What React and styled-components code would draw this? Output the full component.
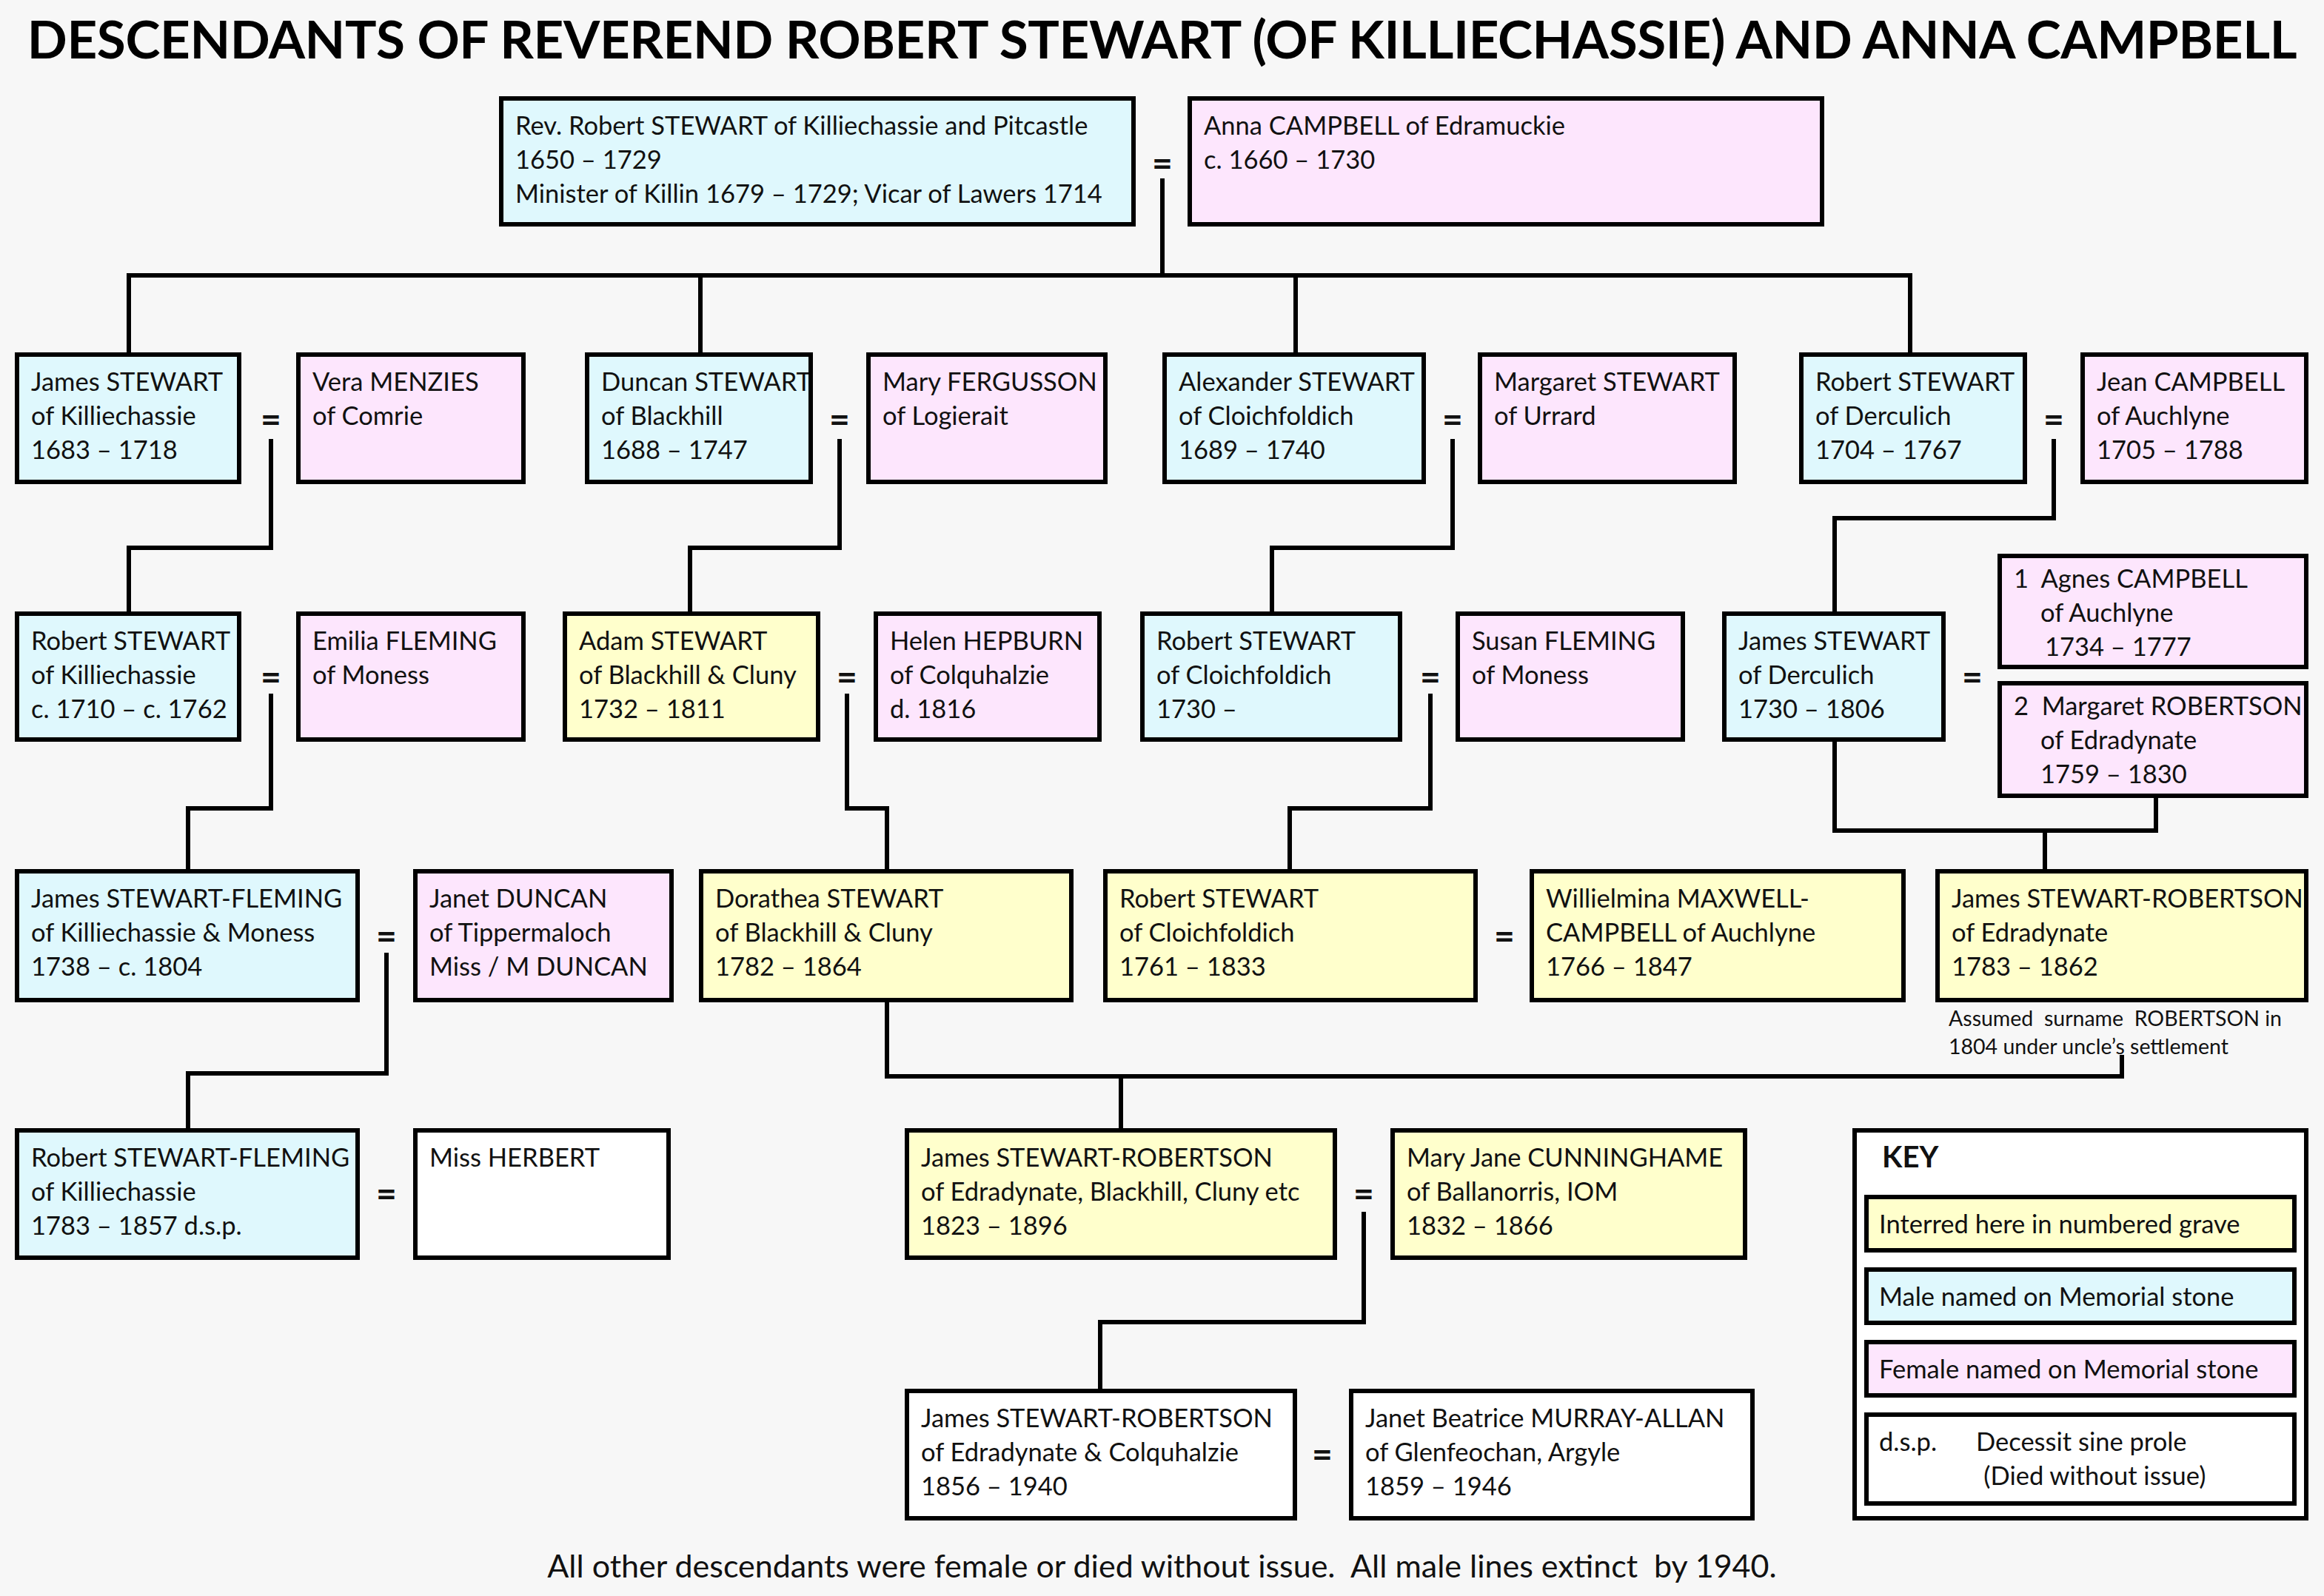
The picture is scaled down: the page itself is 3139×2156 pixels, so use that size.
import React from "react";
import styled, { createGlobalStyle } from "styled-components";

const S = 2;
const Global = createGlobalStyle`
  html, body { margin: 0; padding: 0; background: #f7f7f7; }
  body { font-family: Lato, "Liberation Sans", sans-serif; color: #111; }
`;

const Canvas = styled.div`
  position: relative;
  width: 3139px;
  height: 2156px;
  background: #f7f7f7;
  overflow: hidden;
`;

const Title = styled.h1`
  margin: 0;
  padding-top: 6px;
  text-align: center;
  font-family: Lato, "Liberation Sans", sans-serif;
  font-weight: 700;
  font-size: 71px;
  letter-spacing: -0.4px;
  line-height: 92px;
  color: #000;
`;

const Lines = styled.svg`
  position: absolute;
  left: 0;
  top: 0;
`;

const fills = { m: "#dff8fd", f: "#fde6fd", y: "#ffffcc", w: "#ffffff" };

const Node = styled.div`
  position: absolute;
  box-sizing: border-box;
  border: 6px solid #000;
  background: ${(p) => fills[p.$kind]};
  padding: 10px 0 0 16px;
  font-size: 34.5px;
  line-height: 46px;
  white-space: pre;
  overflow: hidden;
`;

const Line = styled.div`
  padding-left: ${(p) => p.$indent || 0}px;
`;

const Eq = styled.div`
  position: absolute;
  font-weight: 700;
  font-size: 48px;
  line-height: 48px;
  transform: translate(-50%, -50%);
`;

const Note = styled.div`
  position: absolute;
  font-size: 28.5px;
  line-height: 38px;
  white-space: pre;
`;

const KeyBox = styled.div`
  position: absolute;
  box-sizing: border-box;
  border: 6px solid #000;
  background: #fff;
  padding: 8px 10px 0 10px;
  display: flex;
  flex-direction: column;
  gap: 20px;
`;

const KeyTitle = styled.div`
  font-weight: 700;
  font-size: 40px;
  line-height: 48px;
  padding-left: 24px;
  margin-bottom: 8px;
`;

const KeyItem = styled.div`
  box-sizing: border-box;
  border: 6px solid #000;
  background: ${(p) => fills[p.$kind]};
  height: ${(p) => p.$h}px;
  padding: 10px 0 0 14px;
  font-size: 34.5px;
  line-height: 46px;
  white-space: pre;
`;

const Footer = styled.div`
  position: absolute;
  left: 0;
  right: 0;
  top: 2090px;
  text-align: center;
  font-size: 43px;
  line-height: 50px;
  white-space: pre;
`;

const nodes = [
  [337, 65, 767, 153, "m", ["Rev. Robert STEWART of Killiechassie and Pitcastle", "1650 – 1729", "Minister of Killin 1679 – 1729; Vicar of Lawers 1714"]],
  [802, 65, 1232, 153, "f", ["Anna CAMPBELL of Edramuckie", "c. 1660 – 1730"]],
  [10, 238, 163, 327, "m", ["James STEWART", "of Killiechassie", "1683 – 1718"]],
  [200, 238, 355, 327, "f", ["Vera MENZIES", "of Comrie"]],
  [395, 238, 549, 327, "m", ["Duncan STEWART", "of Blackhill", "1688 – 1747"]],
  [585, 238, 748, 327, "f", ["Mary FERGUSSON", "of Logierait"]],
  [785, 238, 963, 327, "m", ["Alexander STEWART", "of Cloichfoldich", "1689 – 1740"]],
  [998, 238, 1173, 327, "f", ["Margaret STEWART", "of Urrard"]],
  [1215, 238, 1369, 327, "m", ["Robert STEWART", "of Derculich", "1704 – 1767"]],
  [1405, 238, 1559, 327, "f", ["Jean CAMPBELL", "of Auchlyne", "1705 – 1788"]],
  [10, 413, 163, 501, "m", ["Robert STEWART", "of Killiechassie", "c. 1710 – c. 1762"]],
  [200, 413, 355, 501, "f", ["Emilia FLEMING", "of Moness"]],
  [380, 413, 554, 501, "y", ["Adam STEWART", "of Blackhill & Cluny", "1732 – 1811"]],
  [590, 413, 744, 501, "f", ["Helen HEPBURN", "of Colquhalzie", "d. 1816"]],
  [770, 413, 947, 501, "m", ["Robert STEWART", "of Cloichfoldich", "1730 –"]],
  [983, 413, 1138, 501, "f", ["Susan FLEMING", "of Moness"]],
  [1163, 413, 1314, 501, "m", ["James STEWART", "of Derculich", "1730 – 1806"]],
  [1349, 374, 1559, 452, "f", [["1  Agnes CAMPBELL", 0], ["of Auchlyne", 36], ["1734 – 1777", 42]]],
  [1349, 460, 1559, 539, "f", [["2  Margaret ROBERTSON", 0], ["of Edradynate", 36], ["1759 – 1830", 36]]],
  [10, 587, 243, 677, "m", ["James STEWART-FLEMING", "of Killiechassie & Moness", "1738 – c. 1804"]],
  [279, 587, 455, 677, "f", ["Janet DUNCAN", "of Tippermaloch", "Miss / M DUNCAN"]],
  [472, 587, 725, 677, "y", ["Dorathea STEWART", "of Blackhill & Cluny", "1782 – 1864"]],
  [745, 587, 998, 677, "y", ["Robert STEWART", "of Cloichfoldich", "1761 – 1833"]],
  [1033, 587, 1287, 677, "y", ["Willielmina MAXWELL-", "CAMPBELL of Auchlyne", "1766 – 1847"]],
  [1307, 587, 1559, 677, "y", ["James STEWART-ROBERTSON", "of Edradynate", "1783 – 1862"]],
  [10, 762, 243, 851, "m", ["Robert STEWART-FLEMING", "of Killiechassie", "1783 – 1857 d.s.p."]],
  [279, 762, 453, 851, "w", ["Miss HERBERT"]],
  [611, 762, 903, 851, "y", ["James STEWART-ROBERTSON", "of Edradynate, Blackhill, Cluny etc", "1823 – 1896"]],
  [939, 762, 1180, 851, "y", ["Mary Jane CUNNINGHAME", "of Ballanorris, IOM", "1832 – 1866"]],
  [611, 938, 876, 1027, "w", ["James STEWART-ROBERTSON", "of Edradynate & Colquhalzie", "1856 – 1940"]],
  [911, 938, 1185, 1027, "w", ["Janet Beatrice MURRAY-ALLAN", "of Glenfeochan, Argyle", "1859 – 1946"]],
];

const eqs = [
  [785, 110], [183, 283], [567, 283], [981, 283], [1387, 283],
  [183, 457], [572, 457], [966, 457], [1332, 457],
  [261, 632], [1016, 632], [261, 806], [921, 806], [893, 982],
];

const paths = [
  "M785 122 V186 M87 186 H1290 M87 186 V238 M473 186 V238 M875 186 V238 M1290 186 V238",
  "M183 298 V370 H87 V413",
  "M567 298 V370 H466 V413",
  "M981 298 V370 H859 V413",
  "M1387 298 V350 H1239 V413",
  "M183 470 V546 H127 V587",
  "M572 470 V546 H599 V587",
  "M966 470 V546 H871 V587",
  "M1239 501 V561 H1456 V539 M1381 561 V587",
  "M261 645 V725 H127 V762",
  "M599 677 V727 H1433 V714 M757 727 V762",
  "M921 820 V893 H743 V938",
];

export default function App() {
  return (
    <Canvas>
      <Global />
      <Title>DESCENDANTS OF REVEREND ROBERT STEWART (OF KILLIECHASSIE) AND ANNA CAMPBELL</Title>
      <Lines width="3139" height="2156" viewBox="0 0 1569.5 1078">
        {paths.map((d, i) => (
          <path key={i} d={d} fill="none" stroke="#000" strokeWidth="3" strokeLinejoin="miter" strokeLinecap="square" />
        ))}
      </Lines>
      {nodes.map(([x1, y1, x2, y2, k, lines], i) => (
        <Node
          key={i}
          $kind={k}
          style={{ left: x1 * S, top: y1 * S, width: (x2 - x1) * S, height: (y2 - y1) * S, paddingTop: y2 - y1 < 85 ? 4 : 10 }}
        >
          {lines.map((l, j) =>
            Array.isArray(l) ? <Line key={j} $indent={l[1]}>{l[0]}</Line> : <Line key={j}>{l}</Line>
          )}
        </Node>
      ))}
      {eqs.map(([x, y], i) => (
        <Eq key={i} style={{ left: x * S, top: y * S }}>=</Eq>
      ))}
      <Note style={{ left: 1316 * S, top: 678 * S }}>{"Assumed  surname  ROBERTSON in\n1804 under uncle’s settlement"}</Note>
      <KeyBox style={{ left: 1251 * S, top: 762 * S, width: 308 * S, height: 265 * S }}>
        <KeyTitle>KEY</KeyTitle>
        <KeyItem $kind="y" $h={78}>Interred here in numbered grave</KeyItem>
        <KeyItem $kind="m" $h={78}>Male named on Memorial stone</KeyItem>
        <KeyItem $kind="f" $h={78}>Female named on Memorial stone</KeyItem>
        <KeyItem $kind="w" $h={126}>{"d.s.p.      Decessit sine prole\n                (Died without issue)"}</KeyItem>
      </KeyBox>
      <Footer>All other descendants were female or died without issue.  All male lines extinct  by 1940.</Footer>
    </Canvas>
  );
}
